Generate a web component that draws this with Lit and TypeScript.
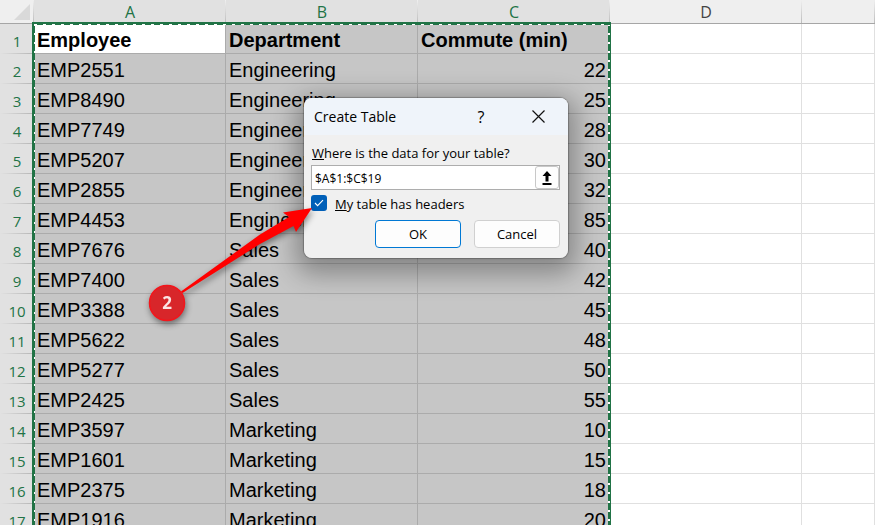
import { LitElement, html, css } from "lit";
import { customElement } from "lit/decorators.js";
import { classMap } from "lit/directives/class-map.js";

const ROWS: [string, string, number][] = [
  ["EMP2551", "Engineering", 22],
  ["EMP8490", "Engineering", 25],
  ["EMP7749", "Engineering", 28],
  ["EMP5207", "Engineering", 30],
  ["EMP2855", "Engineering", 32],
  ["EMP4453", "Engineering", 85],
  ["EMP7676", "Sales", 40],
  ["EMP7400", "Sales", 42],
  ["EMP3388", "Sales", 45],
  ["EMP5622", "Sales", 48],
  ["EMP5277", "Sales", 50],
  ["EMP2425", "Sales", 55],
  ["EMP3597", "Marketing", 10],
  ["EMP1601", "Marketing", 15],
  ["EMP2375", "Marketing", 18],
  ["EMP1916", "Marketing", 20],
];

@customElement("sheet-grid")
export class SheetGrid extends LitElement {
  static styles = css`
    :host {
      display: block;
      position: relative;
      font-family: "Liberation Sans", Arial, sans-serif;
    }
    .grid {
      width: 100%;
      table-layout: fixed;
      border-collapse: separate;
      border-spacing: 0;
      background: #fff;
    }
    .index {
      width: 34px;
    }
    .field {
      width: 192px;
    }
    th,
    td {
      box-sizing: border-box;
      height: 30px;
      padding: 2px 3px 0 3px;
      border: solid #e0e0e0;
      border-width: 0 1px 1px 0;
      font-size: 20px;
      line-height: 24px;
      font-weight: 400;
      text-align: left;
      white-space: nowrap;
      color: #000;
    }
    thead th {
      height: 24px;
      padding: 0;
      border-color: #a6a6a6;
      border-right: 0;
      background: linear-gradient(to top, #bdbdbd, #efefef) right / 1px 100% no-repeat #efefef;
      font-family: "Open Sans", "Noto Sans", sans-serif;
      font-size: 16px;
      line-height: 22px;
      text-align: center;
      color: #444;
    }
    thead .picked {
      background-color: #e1e1e1;
      color: #217346;
    }
    tbody th {
      padding: 3px 0 0;
      border: 0;
      background: linear-gradient(to right, #e1e1e1, #b5b5b5) bottom / 100% 1px no-repeat #e1e1e1;
      font-family: "Open Sans", "Noto Sans", sans-serif;
      font-size: 15px;
      text-align: center;
      color: #217346;
    }
    .picked.cell {
      border-color: #ababab;
      background: #c6c6c6;
    }
    .picked.active {
      background: #fff;
    }
    .bold {
      font-weight: 700;
    }
    .cell.number {
      text-align: right;
    }
    .corner {
      display: block;
      margin: 0 4px 0 auto;
    }
    .marquee {
      position: absolute;
      inset: 22px auto -100px 32px;
      width: 579px;
      box-sizing: border-box;
      border: 2px solid #217346;
      border-right-width: 1px;
      pointer-events: none;
      background:
        repeating-linear-gradient(to right, #fff 0 3px, #217346 3px 9px) top / 100% 1px no-repeat,
        repeating-linear-gradient(to bottom, #fff 0 2px, #217346 2px 9px) left / 1px 100% no-repeat,
        repeating-linear-gradient(to bottom, #fff 0 2px, #217346 2px 9px) right / 2px 100% no-repeat;
    }
  `;

  private cell(value: string | number, active: boolean, bold: boolean) {
    const classes = { cell: true, picked: true, active, bold, number: typeof value === "number" };
    return html`<td class=${classMap(classes)}>${value}</td>`;
  }

  private row(values: (string | number)[], index: number) {
    return html`<tr>
      <th scope="row">${index + 1}</th>
      ${values.map((v, i) => this.cell(v, index === 0 && i === 0, index === 0))}
      <td></td>
      <td></td>
    </tr>`;
  }

  render() {
    const all: (string | number)[][] = [["Employee", "Department", "Commute (min)"], ...ROWS];
    return html`
      <table class="grid">
        <colgroup>
          <col class="index" />
          <col class="field" span="4" />
          <col />
        </colgroup>
        <thead>
          <tr>
            <th>
              <svg class="corner" width="16" height="16" viewBox="0 0 16 16" aria-hidden="true">
                <path d="M16 0V16H0Z" fill="#d9d9d9" />
              </svg>
            </th>
            ${["A", "B", "C"].map((c) => html`<th class="picked" scope="col">${c}</th>`)}
            <th scope="col">D</th>
            <th></th>
          </tr>
        </thead>
        <tbody>
          ${all.map((r, i) => this.row(r, i))}
        </tbody>
      </table>
      <div class="marquee"></div>
    `;
  }
}

@customElement("create-table-dialog")
export class CreateTableDialog extends LitElement {
  static styles = css`
    :host {
      display: block;
      font-family: "Open Sans", "Noto Sans", sans-serif;
      font-size: 13px;
      line-height: 18px;
      color: #000;
    }
    .dialog {
      border-radius: 8px;
      overflow: hidden;
      background: #f0f0f0;
    }
    .bar {
      display: flex;
      align-items: center;
      height: 37px;
      padding: 0 20px 0 10px;
      background: #eff4fa;
    }
    .title {
      flex: 1;
      margin: 0;
      font: inherit;
      font-size: 14px;
    }
    button {
      font: inherit;
      color: inherit;
      padding: 0;
      cursor: pointer;
    }
    .tool {
      display: grid;
      place-items: center;
      width: 20px;
      height: 20px;
      margin-left: 37px;
      border: 0;
      background: none;
      font-size: 16px;
    }
    .body {
      padding: 9px 8px 10px 7px;
    }
    .prompt {
      display: block;
      margin: 0 0 3px 1px;
    }
    .range {
      display: flex;
      box-sizing: border-box;
      height: 25px;
      border: 1px solid #adadad;
      background: #fff;
    }
    .range input {
      flex: 1;
      min-width: 0;
      padding: 2px 3px 0;
      border: 0;
      outline: 0;
      background: none;
      font: inherit;
      font-size: 12px;
    }
    .pick {
      display: grid;
      place-items: center;
      width: 24px;
      border: 1px solid #c8c8c8;
      border-radius: 3px;
      background: #fdfdfd;
    }
    .option {
      display: flex;
      align-items: center;
      gap: 8px;
      margin-top: 5px;
    }
    .option input {
      appearance: none;
      flex: none;
      width: 16px;
      height: 16px;
      margin: 0;
      border-radius: 3px;
      background: #005fb8;
    }
    .tick {
      display: grid;
      place-items: center;
      margin-top: -2px;
    }
    .tick > * {
      grid-area: 1 / 1;
    }
    .tick svg {
      pointer-events: none;
    }
    .actions {
      display: flex;
      justify-content: flex-end;
      gap: 13px;
      margin-top: 7px;
    }
    .actions button {
      width: 86px;
      height: 28px;
      border: 1px solid #d0d0d0;
      border-radius: 4px;
      background: #fdfdfd;
    }
    .actions .primary {
      border-color: #0078d4;
    }
  `;

  render() {
    return html`
      <section class="dialog" role="dialog" aria-labelledby="title">
        <header class="bar">
          <h1 class="title" id="title">Create Table</h1>
          <button class="tool" aria-label="Help">?</button>
          <button class="tool" aria-label="Close">
            <svg width="13" height="13" viewBox="0 0 13 13" fill="none" stroke="#111" stroke-width="1.2">
              <path d="M.5.5l12 12M12.5.5l-12 12" />
            </svg>
          </button>
        </header>
        <div class="body">
          <label class="prompt" for="range"><u>W</u>here is the data for your table?</label>
          <div class="range">
            <input id="range" type="text" .value=${"$A$1:$C$19"} />
            <button class="pick" aria-label="Select range">
              <svg width="10" height="14" viewBox="0 0 10 14">
                <path d="M5 0l4.5 5H6.5v5.5h-3V5H.5ZM.5 12h9v2h-9Z" />
              </svg>
            </button>
          </div>
          <div class="option">
            <span class="tick">
              <input id="headers" type="checkbox" checked />
              <svg width="10" height="8" viewBox="0 0 10 8" fill="none" stroke="#fff" stroke-width="1.1">
                <path d="M1 4l2.6 2.6L9 1.2" />
              </svg>
            </span>
            <label for="headers"><u>M</u>y table has headers</label>
          </div>
          <div class="actions">
            <button class="primary">OK</button>
            <button>Cancel</button>
          </div>
        </div>
      </section>
    `;
  }
}

@customElement("app-root")
export class AppRoot extends LitElement {
  static styles = css`
    :host {
      display: block;
      position: relative;
      height: 100vh;
      overflow: hidden;
      background: #fff;
    }
    .dialog {
      position: absolute;
      left: 304px;
      top: 98px;
      width: 264px;
      border-radius: 8px;
      box-shadow: 0 0 1px 1px rgba(0, 0, 0, 0.25), 0 8px 26px 8px rgba(0, 0, 0, 0.32);
    }
    .callout {
      position: absolute;
      left: 140px;
      top: 190px;
      pointer-events: none;
      filter: drop-shadow(1px 3px 3px rgba(0, 0, 0, 0.45));
    }
    .digit {
      font: 700 17px "Open Sans", "Noto Sans", sans-serif;
      fill: #fbe4e4;
      text-anchor: middle;
    }
  `;

  render() {
    return html`
      <sheet-grid></sheet-grid>
      <create-table-dialog class="dialog"></create-table-dialog>
      <svg class="callout" width="200" height="140" viewBox="0 0 200 140" role="img" aria-label="Step 2">
        <path d="M41 101.5L120 44.5 149 27 143 22.5 172 18 156 42 153.5 36 120 54 42.5 103Z" fill="#f00" />
        <circle cx="27" cy="113" r="17.5" fill="#d8262a" stroke="#f3151b" stroke-width="1.5" />
        <text class="digit" x="27" y="119">2</text>
      </svg>
    `;
  }
}
